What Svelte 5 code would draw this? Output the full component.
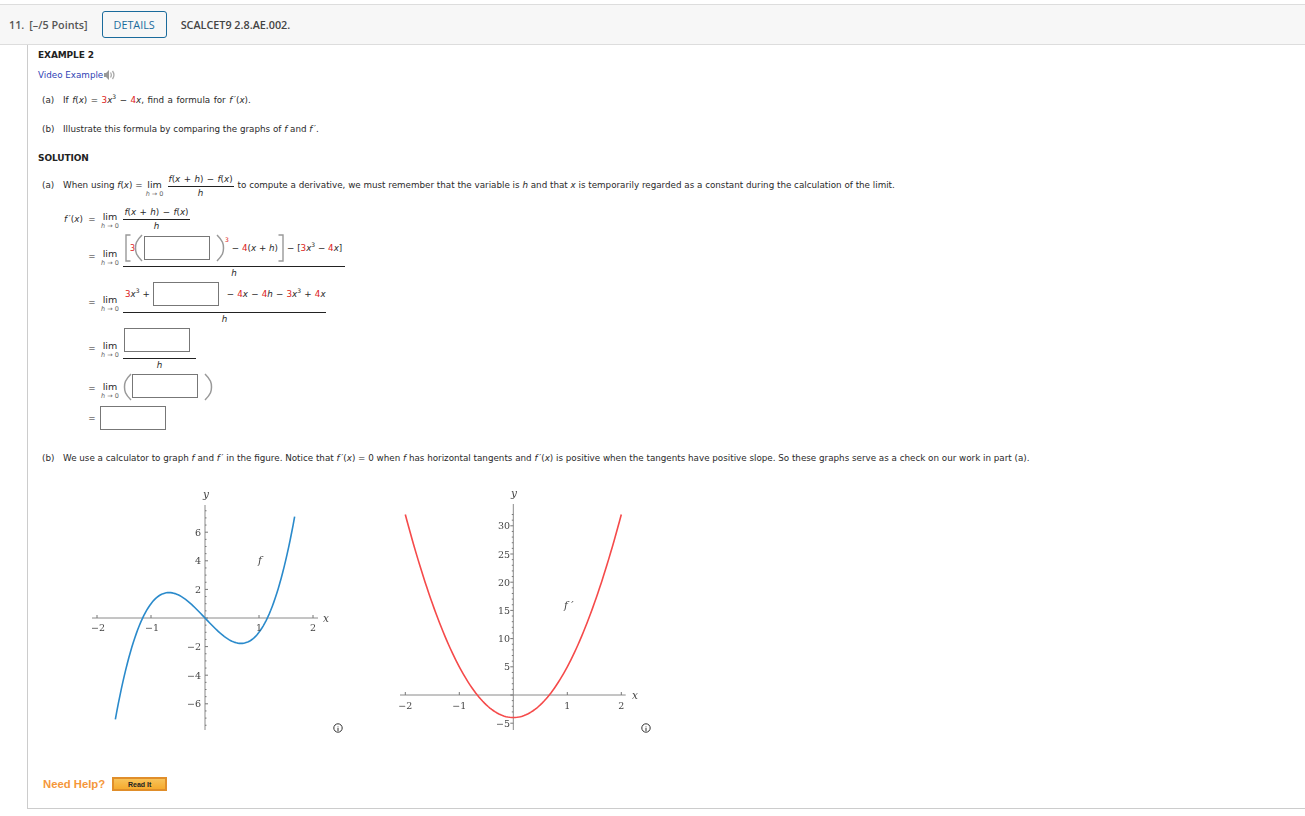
<script>
  const path = (fn, a, b, ox, oy, ux, uy) => {
    let d = '';
    const n = 120;
    for (let i = 0; i <= n; i++) {
      const x = a + ((b - a) * i) / n;
      d += (i ? 'L' : 'M') + (ox + x * ux).toFixed(2) + ' ' + (oy - fn(x) * uy).toFixed(2);
    }
    return d;
  };
  const f = path((x) => 3 * x * x * x - 4 * x, -1.66, 1.66, 205, 618, 54, 14.3);
  const fp = path((x) => 9 * x * x - 4, -2, 2, 513.3, 695, 54, 5.64);
  const xt = [-2, -1, 1, 2];
  const minor1 = Array.from({ length: 31 }, (_, i) => i - 15).map((v) => v * 0.5);
  const minor2 = Array.from({ length: 38 }, (_, i) => i - 5);
  const fmt = (v) => (v < 0 ? '−' + -v : '' + v);
</script>

{#snippet lim()}
  <span class="lim"><span class="limw">lim</span><span class="limu"><i>h</i> → 0</span></span>
{/snippet}

{#snippet dq()}
  <i>f</i>(<i>x</i> + <i>h</i>) − <i>f</i>(<i>x</i>)
{/snippet}

{#snippet paren(cls)}
  <svg class={cls} width="9" height="28" viewBox="0 0 9 28"><path d="M8 1C2 7 1.500 10 1.500 14S2 21 8 27" fill="none" stroke="#999" stroke-width="1.500"/></svg>
{/snippet}

<div class="page">
  <header class="head">
    <span class="num">11.</span>
    <span class="pts">[–/5 Points]</span>
    <span class="details">DETAILS</span>
    <span class="code">SCALCET9 2.8.AE.002.</span>
  </header>

  <main class="box">
    <div class="title t1">EXAMPLE 2</div>
    <div class="video">
      <span class="vlink">Video Example</span>
      <svg width="12" height="12" viewBox="0 0 12 12"><path d="M1 4h2l3-3v10L3 8H1z" fill="#999"/><path d="M7.500 3.500c1 1.500 1 3.500 0 5M9.500 2c1.800 2.500 1.800 5.500 0 8" fill="none" stroke="#aaa" stroke-width="1.300"/></svg>
    </div>
    <p class="part pa"><span class="lab">(a)</span><span>If <i>f</i>(<i>x</i>) = <b class="r">3</b><i>x</i><sup>3</sup> − <b class="r">4</b><i>x</i>, find a formula for <i>f</i>&#8201;′(<i>x</i>).</span></p>
    <p class="part pb"><span class="lab">(b)</span><span>Illustrate this formula by comparing the graphs of <i>f</i> and <i>f</i>&#8201;′.</span></p>
    <div class="title t2">SOLUTION</div>

    <div class="part when">
      <span class="lab">(a)</span>
      <span>When using <i>f</i>(<i>x</i>) =</span>
      <span class="lim inl"><span class="limw">lim</span><span class="limu"><i>h</i> → 0</span></span>
      <span class="frac inlf"><span class="top">{@render dq()}</span><span class="bot"><i>h</i></span></span>
      <span class="rest">to compute a derivative, we must remember that the variable is <i>h</i> and that <i>x</i> is temporarily regarded as a constant during the calculation of the limit.</span>
    </div>

    <div class="math">
      <div class="row r1">
        <span class="lhs"><i>f</i>&#8201;′(<i>x</i>)</span><span class="eq">=</span>
        {@render lim()}
        <span class="frac w1"><span class="top">{@render dq()}</span><span class="bot"><i>h</i></span></span>
      </div>
      <div class="row r2">
        <span class="lhs"></span><span class="eq">=</span>
        {@render lim()}
        <span class="frac w2">
          <span class="top tl">
            <svg class="brk" width="6" height="28" viewBox="0 0 6 28"><path d="M5.500 1H1v26h4.500" fill="none" stroke="#999" stroke-width="1.400"/></svg>
            <b class="r three">3</b>
            {@render paren('pl')}
            <span class="ans"></span>
            {@render paren('pr')}
            <sup class="r s3">3</sup>
            <span class="after">− <b class="r">4</b>(<i>x</i> + <i>h</i>)</span>
            <svg class="brk br" width="6" height="28" viewBox="0 0 6 28"><path d="M.5 1H5v26H.5" fill="none" stroke="#999" stroke-width="1.400"/></svg>
            <span class="after2">− [<b class="r">3</b><i>x</i><sup>3</sup> − <b class="r">4</b><i>x</i>]</span>
          </span>
          <span class="bot"><i>h</i></span>
        </span>
      </div>
      <div class="row r3">
        <span class="lhs"></span><span class="eq">=</span>
        {@render lim()}
        <span class="frac w3">
          <span class="top tl">
            <span class="p3"><b class="r">3</b><i>x</i><sup>3</sup> +</span>
            <span class="ans"></span>
            <span class="a3">− <b class="r">4</b><i>x</i> − <b class="r">4</b><i>h</i> − <b class="r">3</b><i>x</i><sup>3</sup> + <b class="r">4</b><i>x</i></span>
          </span>
          <span class="bot"><i>h</i></span>
        </span>
      </div>
      <div class="row r4">
        <span class="lhs"></span><span class="eq">=</span>
        {@render lim()}
        <span class="frac w4">
          <span class="top tl"><span class="ans a4"></span></span>
          <span class="bot"><i>h</i></span>
        </span>
      </div>
      <div class="row r5">
        <span class="lhs"></span><span class="eq">=</span>
        {@render lim()}
        {@render paren('pl5')}
        <span class="ans"></span>
        {@render paren('pr5')}
      </div>
      <div class="row r6">
        <span class="lhs"></span><span class="eq">=</span>
        <span class="ans a6"></span>
      </div>
    </div>

    <p class="part pb2"><span class="lab">(b)</span><span>We use a calculator to graph <i>f</i> and <i>f</i>&#8201;′ in the figure. Notice that <i>f</i>&#8201;′(<i>x</i>) = <b class="zero">0</b> when <i>f</i> has horizontal tangents and <i>f</i>&#8201;′(<i>x</i>) is positive when the tangents have positive slope. So these graphs serve as a check on our work in part (a).</span></p>

    <div class="figs">
      <svg class="fig" width="280" height="270" viewBox="80 480 280 270">
        <g class="soft">
          <path d="M92 618H318M205 505V730" stroke="#8a8a8a" stroke-width="1" fill="none"/>
          {#each xt as v}<path d="M{205 + v * 54} 615V618" stroke="#777"/>{/each}
          {#each minor1 as v}<path d="M205 {618 - v * 14.3}h{v % 2 === 0 ? 3 : 1.500}" stroke="#777"/>{/each}
          <path d={f} fill="none" stroke="#2a8acb" stroke-width="1.600"/>
          {#each xt as v}<text class="gl" x={205 + v * 54 - (v < 0 ? 6 : 0)} y="631" text-anchor={v < 0 ? 'start' : 'middle'}>{fmt(v)}</text>{/each}
          {#each [6, 4, 2, -2, -4, -6] as v}<text class="gl" x="201" y={618 - v * 14.3 + 3.500} text-anchor="end">{fmt(v)}</text>{/each}
          <text class="gi" x="323" y="622">x</text>
          <text class="gi" x="203" y="498">y</text>
          <text class="gi" x="258" y="564">f</text>
        </g>
        <circle cx="338" cy="728" r="4.200" fill="none" stroke="#333"/>
        <path d="M338 726.500v.8M338 728v3" stroke="#333"/>
      </svg>
      <svg class="fig" width="280" height="270" viewBox="390 480 280 270">
        <g class="soft">
          <path d="M400 695H625.700M513.300 504V730" stroke="#8a8a8a" stroke-width="1" fill="none"/>
          {#each xt as v}<path d="M{513.300 + v * 54} 692V695" stroke="#777"/>{/each}
          {#each minor2 as v}<path d="M513.300 {695 - v * 5.64}h{v % 5 === 0 ? -3 : -1.500}" stroke="#777"/>{/each}
          <path d={fp} fill="none" stroke="#f54a4a" stroke-width="1.600"/>
          {#each xt as v}<text class="gl" x={513.300 + v * 54 - (v < 0 ? 7 : 0)} y="709" text-anchor={v < 0 ? 'start' : 'middle'}>{fmt(v)}</text>{/each}
          {#each [30, 25, 20, 15, 10, 5, -5] as v}<text class="gl" x="510" y={695 - v * 5.64 + 3.500} text-anchor="end">{fmt(v)}</text>{/each}
          <text class="gi" x="632" y="699">x</text>
          <text class="gi" x="511" y="497">y</text>
          <text class="gi" x="564" y="609">f ′</text>
        </g>
        <circle cx="646" cy="728" r="4.200" fill="none" stroke="#333"/>
        <path d="M646 726.500v.8M646 728v3" stroke="#333"/>
      </svg>
    </div>

    <div class="help">
      <span class="need">Need Help?</span>
      <span class="read">Read It</span>
    </div>
  </main>
</div>

<style>
  :global(body) { margin: 0; background: #fff; }
  .page { width: 1305px; height: 816px; overflow: hidden; font-family: "DejaVu Sans", Verdana, sans-serif; font-size: 8.75px; color: #2a2a2a; }
  .head { margin-top: 4px; height: 39px; border-top: 1px solid #ddd; border-bottom: 1px solid #ddd; background: #f7f7f7; display: flex; align-items: center; font-family: "Open Sans", sans-serif; font-size: 10.8px; font-weight: 600; color: #555; padding-left: 9px; }
  .pts { margin-left: 5px; }
  .details { margin-left: 14px; width: 63px; height: 25px; border: 1px solid #1a6b9c; border-radius: 3px; display: flex; align-items: center; justify-content: center; color: #1a6b9c; font-weight: 400; }
  .code { margin-left: 14px; color: #444; }
  .box { margin-left: 27px; height: 764px; border-left: 1px solid #ccc; border-bottom: 1px solid #ccc; padding-left: 10px; padding-top: 2px; box-sizing: border-box; display: block; }
  .title { font-weight: 700; color: #222; font-size: 9px; height: 14px; line-height: 14px; letter-spacing: -.1px; }
  .t1 { padding-top: 1px; }
  .video { margin-top: 6px; height: 14px; display: flex; align-items: center; gap: 0; }
  .vlink { color: #2f3fb5; }
  p { margin: 0; }
  .part { display: flex; align-items: center; padding-left: 4px; height: 14px; line-height: 14px; white-space: nowrap; }
  .lab { width: 21px; flex: none; }
  .pa { margin-top: 11px; word-spacing: .7px; }
  .pb { margin-top: 15px; }
  .t2 { margin-top: 15px; }
  .when { margin-top: 6px; height: 28px; }
  .r { color: #d22; font-weight: 400; }
  .zero { font-weight: 400; }
  sup { font-size: 6px; line-height: 0; vertical-align: 4px; }
  i { font-style: italic; }
  .rest { margin-left: 4px; }
  .lim { display: flex; flex-direction: column; align-items: center; width: 24px; flex: none; }
  .limw { font-size: 9.5px; line-height: 10px; }
  .limu { font-size: 6.5px; line-height: 9px; color: #666; white-space: nowrap; }
  .inl { margin: 9px 4px 0 3px; width: 18px; }
  .frac { display: flex; flex-direction: column; align-items: stretch; flex: none; }
  .top { display: flex; justify-content: center; gap: 3px; border-bottom: 1px solid #222; height: 100%; white-space: pre; align-items: center; }
  .bot { text-align: center; height: 12px; line-height: 12px; }
  .inlf { width: 66px; }
  .inlf .top { height: 14px; gap: 0; display: block; text-align: center; line-height: 14px; word-spacing: .6px; }
  .inlf .bot { height: 12px; }
  .math { margin-top: 6px; padding-left: 26px; }
  .row { display: flex; align-items: flex-end; white-space: nowrap; }
  .lhs { width: 20px; flex: none; height: 100%; }
  .eq { width: 10px; margin-left: 3px; flex: none; text-align: center; margin-bottom: 18px; margin-right: 1px; }
  .row .lim { margin-bottom: 11px; }
  .r1 { height: 27px; }
  .r1 .lhs { height: auto; margin-bottom: 8px; }
  .r1 .eq { margin-bottom: 8px; }
  .r1 .lim { margin-bottom: 1px; }
  .r1 .top { height: 14px; gap: 0; display: block; text-align: center; line-height: 14px; word-spacing: .6px; }
  .row .frac { margin-left: 1px; }
  .w1 { width: 67px; }
  .r2 { height: 44px; margin-top: 3px; }
  .w2 { width: 222px; }
  .w2 .top { justify-content: flex-start; gap: 0; padding-left: 2px; padding-bottom: 4px; height: 28px; }
  .brk { flex: none; }
  .three { font-size: 8px; margin: 0 -1px 0 -1px; width: 5px; }
  .ans { display: block; width: 64px; height: 22px; border: 1px solid #777; flex: none; background: #fff; }
  .pl { flex: none; margin-right: 1px; }
  .pr { transform: scaleX(-1); flex: none; margin-left: 6px; }
  .s3 { align-self: flex-start; margin: 2px 0 0 0; vertical-align: baseline; line-height: 8px; }
  .after { margin-left: 3px; }
  .br { margin-left: 0; }
  .after2 { margin-left: 3px; }
  .r3 { height: 44px; margin-top: 2px; }
  .w3 { width: 203px; }
  .w3 .top { height: 28px; padding-bottom: 4px; justify-content: flex-start; padding-left: 2px; gap: 0; }
  .p3 { margin-right: 3px; }
  .a3 { margin-left: 8px; word-spacing: .4px; }
  .r4 { height: 44px; margin-top: 2px; }
  .w4 { width: 73px; }
  .w4 .top { height: 28px; padding-bottom: 4px; justify-content: flex-start; padding-left: 1px; }
  .r5 { height: 28px; margin-top: 2px; }
  .r5 .eq { margin-bottom: 8px; }
  .r5 .lim { margin-bottom: 0; }
  .r5 .ans { margin-bottom: 3px; width: 64px; }
  .pl5 { margin-left: 1px; flex: none; }
  .pr5 { transform: scaleX(-1); flex: none; margin-left: 6px; }
  .r6 { height: 26px; margin-top: 4px; align-items: center; }
  .r6 .eq { margin-bottom: 0; }
  .a6 { margin-left: 2px; }
  .pb2 { margin-top: 20px; }
  .figs { display: flex; gap: 30px; margin-top: 15px; margin-left: 42px; height: 270px; }
  .fig { display: block; flex: none; }
  .soft { filter: blur(.35px); }
  .gl { font-family: "DejaVu Serif", serif; font-size: 9.5px; fill: #444; }
  .gi { font-family: "DejaVu Serif", serif; font-style: italic; font-size: 10.5px; fill: #444; }
  .help { display: flex; align-items: center; margin-top: 26px; padding-left: 5px; height: 16px; }
  .need { font-family: "Liberation Sans", sans-serif; font-size: 11.3px; font-weight: 700; color: #f5973a; }
  .read { margin-left: 7px; width: 55px; height: 14px; box-sizing: border-box; border: 2px solid #e08e2a; background: linear-gradient(#f8c35a, #f6ab2e); font-family: "Liberation Sans", sans-serif; font-size: 7px; font-weight: 700; color: #222; display: flex; align-items: center; justify-content: center; }
</style>
